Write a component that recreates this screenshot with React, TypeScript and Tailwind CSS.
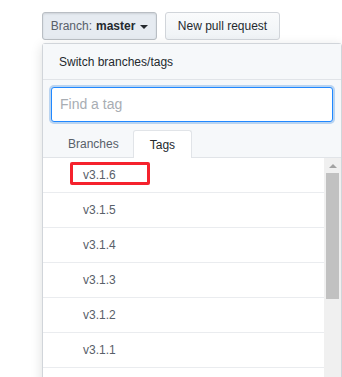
export default function App() {
  const tags = ["v3.1.6", "v3.1.5", "v3.1.4", "v3.1.3", "v3.1.2", "v3.1.1", ""];
  return (
    <div className="h-[377px] w-[342px] overflow-hidden bg-white font-['Liberation_Sans',Arial,sans-serif] text-[12px] text-[#24292e]">
      <div className="pl-[42px] pt-[12px]">
        <div className="flex gap-[8px]">
          <button className="flex h-[28px] w-[115px] items-center justify-center gap-[1px] rounded-[3px] border border-[#b9bec4] bg-[#e6ebf1] text-[12px] shadow-[inset_0_1px_2px_rgba(27,31,35,0.12)]">
            <span className="text-[#586069]">Branch:</span>
            <span className="ml-[3px] font-semibold text-[#24292e]">master</span>
            <span className="ml-[4px] mt-[1px] h-0 w-0 border-x-[4px] border-t-[4px] border-x-transparent border-t-[#24292e]" />
          </button>
          <button className="h-[28px] w-[115px] rounded-[3px] border border-[#d1d5da] bg-gradient-to-b from-[#fafbfc] to-[#eff3f6] text-[12px] text-[#24292e]">
            New pull request
          </button>
        </div>
        <div className="relative mt-[3px] w-[300px] rounded-t-[3px] border border-[#d1d5da] bg-white shadow-[0_3px_12px_rgba(27,31,35,0.15)]">
          <div className="flex h-[36px] items-center border-b border-[#e1e4e8] bg-[#f6f8fa] pl-[16px] text-[12px] text-[#24292e]">
            Switch branches/tags
          </div>
          <div className="bg-[#f6f8fa] px-[8px] pt-[7px]">
            <div className="flex h-[35px] items-center rounded-[3px] border border-[#2188ff] bg-white pl-[8px] text-[14px] text-[#a8adb3] shadow-[0_0_0_2px_rgba(3,102,214,0.25)]">
              Find a tag
            </div>
            <div className="mt-[8px] flex">
              <div className="flex h-[27px] items-center pl-[17px] pr-[14px] text-[12px] text-[#586069]">Branches</div>
              <div className="-mb-px flex h-[28px] items-center rounded-t-[3px] border border-b-0 border-[#e1e4e8] bg-white px-[16px] text-[12px] text-[#24292e]">
                Tags
              </div>
            </div>
          </div>
          <div className="flex border-t border-[#e1e4e8]">
            <div className="flex-1">
              {tags.map((t, i) => (
                <div key={i} className="relative flex h-[35px] items-center border-b border-[#eaecef] pl-[40px] text-[12px] text-[#586069]">
                  {t}
                  {i === 0 && (
                    <span className="absolute left-[27px] top-[4px] h-[23px] w-[80px] rounded-[2px] border-[3px] border-[#f5222d]" />
                  )}
                </div>
              ))}
            </div>
            <div className="flex w-[17px] flex-col items-center bg-[#f0f0f0]">
              <span className="mt-[6px] h-0 w-0 border-x-[4px] border-b-[4px] border-x-transparent border-b-[#a3a3a3]" />
              <span className="mt-[5px] h-[126px] w-[13px] bg-[#c1c1c1]" />
            </div>
          </div>
        </div>
      </div>
    </div>
  );
}
